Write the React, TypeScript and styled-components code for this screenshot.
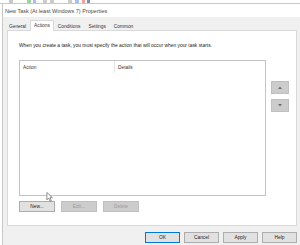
import React from "react";
import styled, { createGlobalStyle } from "styled-components";

const GlobalStyle = createGlobalStyle`
  html, body {
    margin: 0;
    padding: 0;
    background: #ffffff;
  }
  body {
    font-family: "Liberation Sans", Arial, sans-serif;
    color: #222;
  }
`;

const Screen = styled.div`
  position: relative;
  width: 300px;
  height: 245px;
  overflow: hidden;
  display: flex;
  flex-direction: column;
  background: #fff;
`;

// strip of the app behind the dialog
const Backdrop = styled.div`
  height: 3px;
  display: flex;
  align-items: flex-end;
  border-bottom: 1px solid #c9c9c9;
`;

const Chip = styled.div<{ $x: number; $w: number; $c: string }>`
  margin-left: ${($) => $.$x}px;
  width: ${($) => $.$w}px;
  height: 3px;
  background: ${($) => $.$c};
  opacity: 0.55;
`;

const Window = styled.div`
  flex: 1;
  display: flex;
  flex-direction: column;
  margin-left: 2px;
  border-left: 1px solid #c8c8c8;
`;

const TitleBar = styled.div`
  height: 13px;
  display: flex;
  align-items: center;
  padding-left: 2px;
  background: #fff;
  font-size: 5.5px;
  color: #4a4a4a;
`;

const TabStrip = styled.div`
  height: 13px;
  display: flex;
  align-items: flex-end;
  padding-left: 2px;
  background: #f0f0f0;
`;

const Tab = styled.div<{ $active?: boolean }>`
  position: relative;
  z-index: ${($) => ($.$active ? 2 : 0)};
  height: ${($) => ($.$active ? 11 : 9)}px;
  margin-bottom: ${($) => ($.$active ? -1 : 0)}px;
  padding: 0 3px;
  box-sizing: border-box;
  display: flex;
  align-items: center;
  font-size: 4.8px;
  color: #333;
  background: ${($) => ($.$active ? "#fff" : "transparent")};
  border: 1px solid ${($) => ($.$active ? "#d9d9d9" : "transparent")};
  border-bottom: none;
  padding-bottom: ${($) => ($.$active ? 1 : 0)}px;
`;

const Body = styled.div`
  flex: 1;
  display: flex;
  flex-direction: column;
  background: #f0f0f0;
  padding: 0 3px 0 4px;
`;

const Panel = styled.div`
  position: relative;
  z-index: 1;
  height: 196px;
  box-sizing: border-box;
  background: #fff;
  border: 1px solid #d9d9d9;
  padding: 11px 0 0 11px;
  display: flex;
  flex-direction: column;
`;

const Hint = styled.div`
  font-size: 4.9px;
  line-height: 7px;
  color: #222;
  white-space: nowrap;
`;

const ListRow = styled.div`
  margin-top: 11px;
  display: flex;
  gap: 5px;
`;

const List = styled.div`
  width: 247px;
  height: 136px;
  box-sizing: border-box;
  border: 1px solid #c3c3c3;
  background: #fff;
`;

const ListHeader = styled.div`
  height: 12px;
  display: flex;
  font-size: 4.8px;
  color: #333;
`;

const HeaderCell = styled.div<{ $w?: number }>`
  ${($) => ($.$w ? `width: ${$.$w}px;` : "flex: 1;")}
  box-sizing: border-box;
  padding: 0 3px;
  display: flex;
  align-items: center;
  border-right: 1px solid ${($) => ($.$w ? "#e5e5e5" : "transparent")};
`;

const SideButtons = styled.div`
  margin-top: 21px;
  display: flex;
  flex-direction: column;
  gap: 5px;
`;

const ArrowButton = styled.div`
  width: 18px;
  height: 13px;
  box-sizing: border-box;
  background: #cccccc;
  border: 1px solid #bfbfbf;
  display: flex;
  align-items: center;
  justify-content: center;
`;

const ActionRow = styled.div`
  margin-top: 5px;
  display: flex;
  gap: 6px;
`;

const Button = styled.div<{ $disabled?: boolean; $default?: boolean; $w?: number }>`
  width: ${($) => $.$w ?? 36}px;
  height: 11px;
  box-sizing: border-box;
  display: flex;
  align-items: center;
  justify-content: center;
  font-size: 4.8px;
  color: ${($) => ($.$disabled ? "#9a9a9a" : "#222")};
  background: ${($) => ($.$disabled ? "#cccccc" : "#e1e1e1")};
  border: 1px solid
    ${($) => ($.$default ? "#0078d7" : $.$disabled ? "#bfbfbf" : "#adadad")};
`;

const Footer = styled.div`
  flex: 1;
  display: flex;
  justify-content: flex-end;
  align-items: flex-start;
  padding-top: 6px;
  gap: 4px;
`;

const Cursor = styled.svg`
  position: absolute;
  left: 46px;
  top: 192px;
  z-index: 5;
`;

const chips = [
  { x: 9, w: 4, c: "#9a9a9a" },
  { x: 14, w: 4, c: "#4caf50" },
  { x: 2, w: 3, c: "#5b8bd0" },
  { x: 7, w: 4, c: "#a0a0a0" },
  { x: 3, w: 4, c: "#a0a0a0" },
  { x: 14, w: 4, c: "#a0a0a0" },
  { x: 3, w: 4, c: "#5b8bd0" },
  { x: 3, w: 3, c: "#d9534f" },
  { x: 2, w: 3, c: "#1f2d6b" },
];

const tabs = ["General", "Actions", "Conditions", "Settings", "Common"];

export default function App() {
  return (
    <Screen>
      <GlobalStyle />
      <Backdrop>
        {chips.map((c, i) => (
          <Chip key={i} $x={c.x} $w={c.w} $c={c.c} />
        ))}
      </Backdrop>
      <Window>
        <TitleBar>New Task (At least Windows 7) Properties</TitleBar>
        <TabStrip>
          {tabs.map((t) => (
            <Tab key={t} $active={t === "Actions"}>
              {t}
            </Tab>
          ))}
        </TabStrip>
        <Body>
          <Panel>
            <Hint>
              When you create a task, you must specify the action that will
              occur when your task starts.
            </Hint>
            <ListRow>
              <div>
                <List>
                  <ListHeader>
                    <HeaderCell $w={95}>Action</HeaderCell>
                    <HeaderCell>Details</HeaderCell>
                  </ListHeader>
                </List>
                <ActionRow>
                  <Button>New...</Button>
                  <Button $disabled>Edit...</Button>
                  <Button $disabled>Delete</Button>
                </ActionRow>
              </div>
              <SideButtons>
                <ArrowButton>
                  <svg width="4" height="3" viewBox="0 0 4 3">
                    <path d="M0 3 L2 0.5 L4 3 Z" fill="#6d6d6d" />
                  </svg>
                </ArrowButton>
                <ArrowButton>
                  <svg width="4" height="3" viewBox="0 0 4 3">
                    <path d="M0 0 L4 0 L2 2.5 Z" fill="#6d6d6d" />
                  </svg>
                </ArrowButton>
              </SideButtons>
            </ListRow>
          </Panel>
          <Footer>
            <Button $default $w={35}>OK</Button>
            <Button $w={35}>Cancel</Button>
            <Button $w={35}>Apply</Button>
            <Button $w={35}>Help</Button>
          </Footer>
        </Body>
      </Window>
      <Cursor width="7" height="10" viewBox="0 0 12 19">
        <path
          d="M1 1 L1 15 L4.5 11.5 L7 17.5 L9.5 16.5 L7 10.8 L11.5 10.8 Z"
          fill="#fff"
          stroke="#555"
          strokeWidth="1.2"
          strokeLinejoin="round"
        />
      </Cursor>
    </Screen>
  );
}
